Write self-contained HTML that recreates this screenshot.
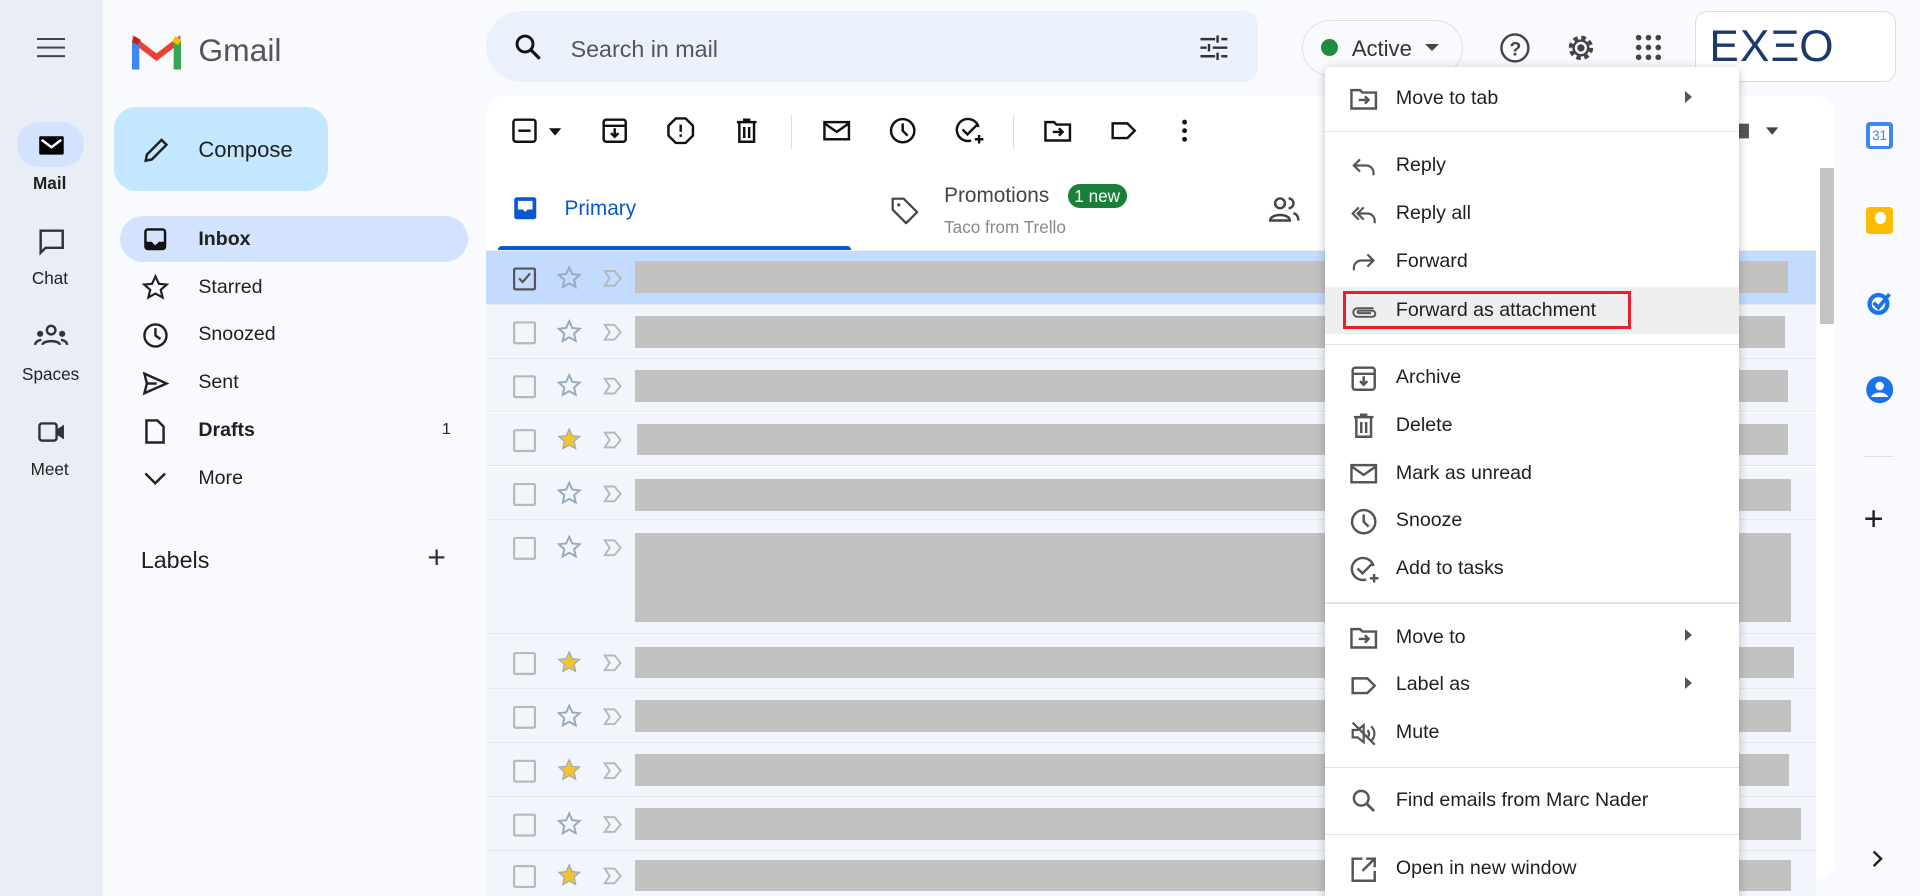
<!DOCTYPE html>
<html><head><meta charset="utf-8"><style>
html,body{margin:0;padding:0;width:1920px;height:896px;overflow:hidden;background:#f8fafd;}
#r{position:absolute;left:0;top:0;width:1568px;height:732px;zoom:1.22449;font-family:"Liberation Sans",Arial,sans-serif;color:#1f1f1f;overflow:hidden;background:#f8fafd}
.a{position:absolute}
.t{font-size:16px}
svg{position:absolute}
.row{position:absolute;left:397px;width:1086px;background:#f2f6fc;border-bottom:1px solid #e3e6ea;overflow:hidden}
.bar{position:absolute;left:122px;background:#c2c2c2}
.mi{position:absolute;left:0;width:338px;height:39px}
.mi span{position:absolute;left:58px;top:10px;font-size:16px;color:#1f1f1f}
.mi svg{left:20px;top:8px}
.sep{position:absolute;left:0;width:338px;height:1px;background:#e3e3e3}
</style></head><body><div id="r">
<!-- left rail -->
<div class="a" style="left:0;top:0;width:84px;height:732px;background:#e9eef6"></div>
<div class="a" style="left:30px;top:31px;width:23px;height:2px;background:#444;box-shadow:0 7px 0 #444,0 14px 0 #444"></div>
<div class="a" style="left:14px;top:100px;width:55px;height:36px;border-radius:18px;background:#d3e3fd"></div>
<svg style="left:31px;top:110px" width="22" height="17"><rect x="1" y="1" width="20" height="15" rx="1" fill="#000"/><path d="M3 4l8 6 8-6" stroke="#fff" stroke-width="2" fill="none"/></svg>
<div class="a" style="left:27px;top:141px;font-size:14px;font-weight:bold">Mail</div>
<svg style="left:30px;top:185px" width="24" height="24"><path d="M3 3h18v14H7l-4 4z" stroke="#333" stroke-width="2" fill="none"/></svg>
<div class="a" style="left:26px;top:219px;font-size:14px">Chat</div>
<svg style="left:28px;top:265px" width="28" height="20"><circle cx="14" cy="5" r="3.5" stroke="#333" stroke-width="2" fill="none"/><circle cx="5" cy="8" r="2.5" fill="#333"/><circle cx="23" cy="8" r="2.5" fill="#333"/><path d="M7 17c0-4 14-4 14 0M1 17c0-3 4-4 5-4M27 17c0-3-4-4-5-4" stroke="#333" stroke-width="2" fill="none"/></svg>
<div class="a" style="left:18px;top:297px;font-size:14px">Spaces</div>
<svg style="left:30px;top:344px" width="24" height="18"><rect x="2" y="2" width="14" height="14" rx="2" stroke="#333" stroke-width="2" fill="none"/><path d="M16 7l6-4v12l-6-4z" fill="#333"/></svg>
<div class="a" style="left:25px;top:375px;font-size:14px">Meet</div>
<!-- logo -->
<svg style="left:108px;top:28px" width="40" height="30"><path d="M3 29V6l17 13L37 6v23" fill="none" stroke="#ea4335" stroke-width="5"/><path d="M3 29V6" stroke="#4285f4" stroke-width="6"/><path d="M37 29V6" stroke="#34a853" stroke-width="6"/><path d="M34 4l5 3" stroke="#fbbc04" stroke-width="5"/><path d="M1 4l5 3" stroke="#c5221f" stroke-width="5"/></svg>
<div class="a" style="left:162px;top:26px;font-size:26px;color:#555">Gmail</div>
<div class="a" style="left:93px;top:87px;width:175px;height:69px;border-radius:18px;background:#c2e7ff"></div>
<svg style="left:116px;top:110px" width="24" height="24"><path d="M3 21l1-5L16 4l4 4L8 20z" stroke="#1f1f1f" stroke-width="2" fill="none"/></svg>
<div class="a t" style="left:162px;top:112px;font-size:18px">Compose</div>
<div class="a" style="left:98px;top:176px;width:284px;height:38px;border-radius:19px;background:#d3e3fd"></div>
<svg style="left:117px;top:185px" width="20" height="20"><rect x="2" y="2" width="16" height="16" rx="2" stroke="#111" stroke-width="2" fill="none"/><path d="M2 12h5l3 3 3-3h5v6H2z" fill="#111"/></svg>
<div class="a t" style="left:162px;top:186px;font-weight:bold">Inbox</div>
<svg style="left:116px;top:224px" width="22" height="22"><path d="M11 2l2.8 6 6.4.6-4.9 4.3 1.5 6.3L11 16l-5.8 3.2 1.5-6.3L1.8 8.6 8.2 8z" stroke="#222" stroke-width="1.8" fill="none"/></svg>
<div class="a t" style="left:162px;top:225px">Starred</div>
<svg style="left:116px;top:263px" width="22" height="22"><circle cx="11" cy="11" r="9" stroke="#222" stroke-width="2" fill="none"/><path d="M11 5v6l4 3" stroke="#222" stroke-width="2" fill="none"/></svg>
<div class="a t" style="left:162px;top:264px">Snoozed</div>
<svg style="left:116px;top:302px" width="22" height="22"><path d="M2 3l18 8-18 8 2-8z M4 11h8" stroke="#222" stroke-width="2" fill="none"/></svg>
<div class="a t" style="left:162px;top:303px">Sent</div>
<svg style="left:118px;top:341px" width="18" height="22"><path d="M2 2h9l5 5v13H2z" stroke="#222" stroke-width="2" fill="none"/></svg>
<div class="a t" style="left:162px;top:342px;font-weight:bold">Drafts</div>
<div class="a" style="left:361px;top:344px;font-size:13px">1</div>
<svg style="left:117px;top:385px" width="20" height="12"><path d="M2 2l8 8 8-8" stroke="#222" stroke-width="2" fill="none"/></svg>
<div class="a t" style="left:162px;top:381px">More</div>
<div class="a" style="left:115px;top:447px;font-size:19px">Labels</div>
<div class="a" style="left:349px;top:440px;font-size:26px;color:#333">+</div>
<!-- search -->
<div class="a" style="left:397px;top:9px;width:630px;height:58px;border-radius:29px 12px 12px 29px;background:#eaf1fb"></div>
<svg style="left:420px;top:27px" width="24" height="24"><circle cx="9" cy="9" r="6.5" stroke="#111" stroke-width="2.4" fill="none"/><path d="M14 14l7 7" stroke="#111" stroke-width="2.6"/></svg>
<div class="a" style="left:466px;top:29px;font-size:19px;color:#555">Search in mail</div>
<svg style="left:978px;top:27px" width="26" height="24"><path d="M2 5h12M19 5h5M2 12h5M12 12h12M2 19h12M19 19h5M16 2v6M9 9v6M16 16v6" stroke="#333" stroke-width="2"/></svg>
<!-- top right -->
<div class="a" style="left:1063px;top:16px;width:132px;height:46px;border-radius:23px;border:1px solid #ddd;box-sizing:border-box"></div>
<div class="a" style="left:1079px;top:32px;width:14px;height:14px;border-radius:50%;background:#1e8e3e"></div>
<div class="a" style="left:1104px;top:29px;font-size:18px;color:#333">Active</div>
<div class="a" style="left:1164px;top:36px;border:6px solid transparent;border-top:6px solid #444"></div>
<svg style="left:1224px;top:26px" width="26" height="26"><circle cx="13" cy="13" r="11" stroke="#444" stroke-width="2" fill="none"/><text x="8.5" y="19" font-family="Liberation Sans" font-size="16" font-weight="bold" fill="#444">?</text></svg>
<svg style="left:1278px;top:26px" width="26" height="26"><circle cx="13" cy="13" r="8" stroke="#444" stroke-width="4" stroke-dasharray="3.5 2.8" fill="none"/><circle cx="13" cy="13" r="6" stroke="#444" stroke-width="2" fill="none"/><circle cx="13" cy="13" r="3" fill="#444"/></svg>
<svg style="left:1335px;top:28px" width="22" height="22" fill="#444"><circle cx="3" cy="3" r="2.3"/><circle cx="11" cy="3" r="2.3"/><circle cx="19" cy="3" r="2.3"/><circle cx="3" cy="11" r="2.3"/><circle cx="11" cy="11" r="2.3"/><circle cx="19" cy="11" r="2.3"/><circle cx="3" cy="19" r="2.3"/><circle cx="11" cy="19" r="2.3"/><circle cx="19" cy="19" r="2.3"/></svg>
<div class="a" style="left:1384px;top:9px;width:164px;height:58px;border-radius:10px;border:1px solid #ddd;box-sizing:border-box;background:#fff"></div>
<div class="a" style="left:1396px;top:18px;font-size:36px;color:#1b3a6b;letter-spacing:1px">EX<span style="letter-spacing:0">Ξ</span>O</div>
<!-- main panel -->
<div class="a" style="left:397px;top:78px;width:1102px;height:640px;border-radius:16px;background:#fff"></div>
<svg style="left:417px;top:95px" width="50" height="24"><rect x="2" y="3" width="18" height="18" rx="2" stroke="#111" stroke-width="2" fill="none"/><path d="M6 12h10" stroke="#111" stroke-width="2"/><path d="M31 10h10l-5 6z" fill="#111"/></svg>
<svg style="left:490px;top:95px" width="24" height="24"><rect x="3" y="3" width="18" height="18" rx="2" stroke="#111" stroke-width="2" fill="none"/><path d="M3 8h18M12 10v7M9 14l3 3 3-3" stroke="#111" stroke-width="2" fill="none"/></svg>
<svg style="left:544px;top:95px" width="24" height="24"><path d="M8 2h8l6 6v8l-6 6H8l-6-6V8z" stroke="#111" stroke-width="2" fill="none"/><path d="M12 7v6M12 15v2" stroke="#111" stroke-width="2"/></svg>
<svg style="left:598px;top:95px" width="24" height="24"><path d="M4 5h16M9 3h6M6 5v16h12V5M10 9v9M14 9v9" stroke="#111" stroke-width="2" fill="none"/></svg>
<div class="a" style="left:646px;top:94px;width:1px;height:28px;background:#ddd"></div>
<svg style="left:671px;top:95px" width="24" height="24"><rect x="2" y="5" width="20" height="14" stroke="#111" stroke-width="2" fill="none"/><path d="M2 6l10 7 10-7" stroke="#111" stroke-width="2" fill="none"/></svg>
<svg style="left:725px;top:95px" width="24" height="24"><circle cx="12" cy="12" r="9.5" stroke="#111" stroke-width="2" fill="none"/><path d="M12 6v6l4 4" stroke="#111" stroke-width="2" fill="none"/></svg>
<svg style="left:779px;top:95px" width="26" height="26"><path d="M20 9a9 9 0 1 0-6 11" stroke="#111" stroke-width="2" fill="none"/><path d="M7 11l4 4 8-8M17 19h7M20.5 15.5v7" stroke="#111" stroke-width="2" fill="none"/></svg>
<div class="a" style="left:827px;top:94px;width:1px;height:28px;background:#ddd"></div>
<svg style="left:852px;top:95px" width="24" height="24"><path d="M2 5h7l2 2h11v13H2z" stroke="#111" stroke-width="2" fill="none"/><path d="M8 13h8M13 10l3 3-3 3" stroke="#111" stroke-width="2" fill="none"/></svg>
<svg style="left:906px;top:95px" width="24" height="24"><path d="M3 6h12l6 6-6 6H3z" stroke="#111" stroke-width="2" fill="none"/></svg>
<svg style="left:960px;top:95px" width="14" height="24" fill="#111"><circle cx="7" cy="5" r="2"/><circle cx="7" cy="12" r="2"/><circle cx="7" cy="19" r="2"/></svg>
<svg style="left:1406px;top:98px" width="50" height="18"><rect x="2" y="3" width="20" height="12" fill="#555"/><path d="M36 6h10l-5 6z" fill="#444"/></svg>
<!-- tabs -->
<svg style="left:419px;top:160px" width="20" height="20"><rect x="1" y="1" width="18" height="18" rx="2" fill="#0b57d0"/><path d="M4 4h12v7h-4l-2 2-2-2H4z" fill="#fff"/></svg>
<div class="a" style="left:461px;top:161px;font-size:17px;color:#0b57d0">Primary</div>
<div class="a" style="left:407px;top:201px;width:288px;height:4px;border-radius:3px 3px 0 0;background:#0b57d0"></div>
<svg style="left:726px;top:159px" width="26" height="26"><path d="M3 3h9l11 11-9 9L3 12z" stroke="#444" stroke-width="1.8" fill="none" stroke-linejoin="round"/><circle cx="8" cy="8" r="1.3" fill="#444"/></svg>
<div class="a" style="left:771px;top:150px;font-size:17px;color:#444">Promotions</div>
<div class="a" style="left:872px;top:150px;width:48px;height:20px;border-radius:10px;background:#188038;color:#fff;font-size:14px;text-align:center;line-height:20px">1 new</div>
<div class="a" style="left:771px;top:177px;font-size:14px;color:#888">Taco from Trello</div>
<svg style="left:1036px;top:160px" width="26" height="22"><circle cx="9" cy="6" r="4" stroke="#444" stroke-width="2" fill="none"/><path d="M1 20c0-6 16-6 16 0z" stroke="#444" stroke-width="2" fill="none"/><path d="M16 2a4 4 0 0 1 0 8M20 14c3 1 4 3 4 6" stroke="#444" stroke-width="2" fill="none"/></svg>
<div class="a" style="left:397px;top:204px;width:1086px;height:1px;background:#eee"></div>
<!-- rows -->
<div class="row" style="top:205px;height:43px;background:#c2dbff"><div class="bar" style="top:8px;width:941px;height:26px"></div></div>
<div class="row" style="top:249px;height:43px"><div class="bar" style="top:9px;width:939px;height:26px"></div></div>
<div class="row" style="top:293px;height:43px"><div class="bar" style="top:9px;width:941px;height:26px"></div></div>
<div class="row" style="top:337px;height:43px"><div class="bar" style="top:9px;width:940px;height:26px;left:123px"></div></div>
<div class="row" style="top:381px;height:43px"><div class="bar" style="top:10px;width:944px;height:26px"></div></div>
<div class="row" style="top:425px;height:92px"><div class="bar" style="top:10px;width:944px;height:73px"></div></div>
<div class="row" style="top:518px;height:44px"><div class="bar" style="top:10px;width:946px;height:26px"></div></div>
<div class="row" style="top:563px;height:43px"><div class="bar" style="top:9px;width:944px;height:26px"></div></div>
<div class="row" style="top:607px;height:43px"><div class="bar" style="top:9px;width:942px;height:26px"></div></div>
<div class="row" style="top:651px;height:43px"><div class="bar" style="top:9px;width:952px;height:26px"></div></div>
<div class="row" style="top:695px;height:43px"><div class="bar" style="top:7px;width:944px;height:26px"></div></div>
<svg style="left:415px;top:212px" width="110" height="530">
<g fill="none" stroke="#b8b8b8" stroke-width="1.8">
<rect x="5" y="7" width="17" height="17" rx="1" stroke="#555"/><path d="M9 15l3 3 6-7" stroke="#555"/>
<rect x="5" y="51" width="17" height="17" rx="1"/><rect x="5" y="95" width="17" height="17" rx="1"/><rect x="5" y="139" width="17" height="17" rx="1"/><rect x="5" y="183" width="17" height="17" rx="1"/><rect x="5" y="227" width="17" height="17" rx="1"/><rect x="5" y="321" width="17" height="17" rx="1"/><rect x="5" y="365" width="17" height="17" rx="1"/><rect x="5" y="409" width="17" height="17" rx="1"/><rect x="5" y="453" width="17" height="17" rx="1"/><rect x="5" y="495" width="17" height="17" rx="1"/>
</g>
<g stroke="#b8b8b8" stroke-width="1.6" fill="none">
<path id="s" d="M50 6l2.5 5.5 6 .6-4.5 4 1.3 6-5.3-3-5.3 3 1.3-6-4.5-4 6-.6z" stroke="#9ab"/>
<use href="#s" y="44"/><use href="#s" y="88"/><use href="#s" y="176"/><use href="#s" y="220"/><use href="#s" y="358"/><use href="#s" y="446"/>
<path id="i" d="M79 9h8l5 6-5 6h-8l4-6z"/>
<use href="#i" y="44"/><use href="#i" y="88"/><use href="#i" y="132"/><use href="#i" y="176"/><use href="#i" y="220"/><use href="#i" y="314"/><use href="#i" y="358"/><use href="#i" y="402"/><use href="#i" y="446"/><use href="#i" y="488"/>
</g>
<g fill="#f4c430"><use href="#s" y="132" stroke="none"/><use href="#s" y="314" stroke="none"/><use href="#s" y="402" stroke="none"/><use href="#s" y="488" stroke="none"/></g>
</svg>
<!-- scrollbar -->
<div class="a" style="left:1486px;top:137px;width:12px;height:128px;background:#c4c4c4"></div>
<!-- right side -->
<div class="a" style="left:1524px;top:100px;width:22px;height:22px;border-radius:3px;background:#4285f4"></div>
<div class="a" style="left:1527px;top:103px;width:16px;height:16px;background:#fff;font-size:11px;color:#4285f4;text-align:center;line-height:16px">31</div>
<div class="a" style="left:1524px;top:169px;width:22px;height:22px;border-radius:3px;background:#fbbc04"></div>
<div class="a" style="left:1531px;top:173px;width:9px;height:10px;border-radius:5px;background:#fff"></div>
<svg style="left:1523px;top:235px" width="24" height="24"><circle cx="11" cy="13" r="9" fill="#1a73e8"/><circle cx="11" cy="13" r="5.5" fill="#fff"/><path d="M7 12l4 4 9-11" stroke="#1a73e8" stroke-width="3" fill="none"/></svg>
<svg style="left:1523px;top:306px" width="24" height="24"><circle cx="12" cy="12" r="11" fill="#1a73e8"/><circle cx="12" cy="9" r="3.5" fill="#fff"/><path d="M5 18c2-5 12-5 14 0" fill="#fff"/></svg>
<div class="a" style="left:1522px;top:372px;width:24px;height:1px;background:#ddd"></div>
<div class="a" style="left:1522px;top:408px;font-size:28px;color:#222">+</div>
<svg style="left:1527px;top:693px" width="12" height="16"><path d="M3 2l6 6-6 6" stroke="#222" stroke-width="2" fill="none"/></svg>
<!-- context menu -->
<div class="a" style="left:1082px;top:55px;width:338px;height:690px;background:#fff;box-shadow:0 2px 8px rgba(0,0,0,.25);border-radius:4px">
<div class="mi" style="top:6px"><svg width="24" height="24"><path d="M2 5h7l2 2h11v13H2z" stroke="#555" stroke-width="2" fill="none"/><path d="M8 13h8M13 10l3 3-3 3" stroke="#555" stroke-width="2" fill="none"/></svg><span>Move to tab</span><div class="a" style="left:294px;top:13px;border:5px solid transparent;border-left:6px solid #555"></div></div>
<div class="sep" style="top:52px"></div>
<div class="mi" style="top:61px"><svg width="24" height="24"><path d="M9 6l-5 5 5 5M4 11h10a6 6 0 0 1 6 6v2" stroke="#555" stroke-width="1.8" fill="none"/></svg><span>Reply</span></div>
<div class="mi" style="top:100px"><svg width="24" height="24"><path d="M8 6l-5 5 5 5M12 6l-5 5 5 5M7 11h8a6 6 0 0 1 6 6v2" stroke="#555" stroke-width="1.8" fill="none"/></svg><span>Reply all</span></div>
<div class="mi" style="top:139px"><svg width="24" height="24"><path d="M15 6l5 5-5 5M20 11H10a6 6 0 0 0-6 6v2" stroke="#555" stroke-width="1.8" fill="none"/></svg><span>Forward</span></div>
<div class="mi" style="top:179px;background:#eee"><svg width="24" height="24"><path d="M20 10H7a3.5 3.5 0 0 0 0 7h12a2.5 2.5 0 0 0 0-5H8a1 1 0 0 0 0 2h10" stroke="#555" stroke-width="1.6" fill="none"/></svg><span>Forward as attachment</span><div class="a" style="left:15px;top:4px;width:235px;height:31px;border:3px solid #e5202a;box-sizing:border-box"></div></div>
<div class="sep" style="top:226px"></div>
<div class="mi" style="top:234px"><svg width="24" height="24"><rect x="3" y="3" width="18" height="18" rx="2" stroke="#555" stroke-width="2" fill="none"/><path d="M3 8h18M12 10v7M9 14l3 3 3-3" stroke="#555" stroke-width="2" fill="none"/></svg><span>Archive</span></div>
<div class="mi" style="top:273px"><svg width="24" height="24"><path d="M4 5h16M9 3h6M6 5v16h12V5M10 9v9M14 9v9" stroke="#555" stroke-width="2" fill="none"/></svg><span>Delete</span></div>
<div class="mi" style="top:312px"><svg width="24" height="24"><rect x="2" y="5" width="20" height="14" stroke="#555" stroke-width="2" fill="none"/><path d="M2 6l10 7 10-7" stroke="#555" stroke-width="2" fill="none"/></svg><span>Mark as unread</span></div>
<div class="mi" style="top:351px"><svg width="24" height="24"><circle cx="12" cy="12" r="9.5" stroke="#555" stroke-width="2" fill="none"/><path d="M12 6v6l4 4" stroke="#555" stroke-width="2" fill="none"/></svg><span>Snooze</span></div>
<div class="mi" style="top:390px"><svg width="26" height="26"><path d="M20 9a9 9 0 1 0-6 11" stroke="#555" stroke-width="2" fill="none"/><path d="M7 11l4 4 8-8M17 19h7M20.5 15.5v7" stroke="#555" stroke-width="2" fill="none"/></svg><span>Add to tasks</span></div>
<div class="sep" style="top:437px"></div>
<div class="mi" style="top:446px"><svg width="24" height="24"><path d="M2 5h7l2 2h11v13H2z" stroke="#555" stroke-width="2" fill="none"/><path d="M8 13h8M13 10l3 3-3 3" stroke="#555" stroke-width="2" fill="none"/></svg><span>Move to</span><div class="a" style="left:294px;top:13px;border:5px solid transparent;border-left:6px solid #555"></div></div>
<div class="mi" style="top:485px"><svg width="24" height="24"><path d="M3 6h12l6 6-6 6H3z" stroke="#555" stroke-width="2" fill="none"/></svg><span>Label as</span><div class="a" style="left:294px;top:13px;border:5px solid transparent;border-left:6px solid #555"></div></div>
<div class="mi" style="top:524px"><svg width="24" height="24"><path d="M3 9h4l5-4v14l-5-4H3zM15 9a4 4 0 0 1 0 6M18 6a8 8 0 0 1 0 12M3 3l18 18" stroke="#555" stroke-width="1.8" fill="none"/></svg><span>Mute</span></div>
<div class="sep" style="top:571px"></div>
<div class="mi" style="top:579px"><svg width="24" height="24"><circle cx="10" cy="10" r="6" stroke="#555" stroke-width="2" fill="none"/><path d="M14.5 14.5l6 6" stroke="#555" stroke-width="2.2"/></svg><span>Find emails from Marc Nader</span></div>
<div class="sep" style="top:626px"></div>
<div class="mi" style="top:635px"><svg width="24" height="24"><path d="M11 3H3v18h18v-8M14 3h7v7M21 3l-10 10" stroke="#555" stroke-width="2" fill="none"/></svg><span>Open in new window</span></div>
</div>
</div></body></html>
